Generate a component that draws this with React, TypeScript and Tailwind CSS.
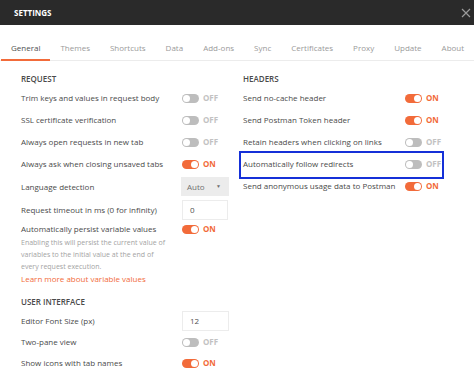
import React from "react";

const tabs = ["General", "Themes", "Shortcuts", "Data", "Add-ons", "Sync", "Certificates", "Proxy", "Update", "About"];

function Toggle({ on }: { on: boolean }) {
  return (
    <div className="flex items-center gap-[4px]">
      <div
        className={
          on
            ? "flex h-[9px] w-[17px] items-center justify-end rounded-full bg-[#f26b3a] px-[1px]"
            : "flex h-[9px] w-[17px] items-center justify-start rounded-full bg-[#bdbdbd] px-[1px]"
        }
      >
        <div className="h-[7px] w-[7px] rounded-full bg-white" />
      </div>
      <span className={on ? "text-[8px] font-bold text-[#f26b3a]" : "text-[8px] font-bold text-[#c2c2c2]"}>
        {on ? "ON" : "OFF"}
      </span>
    </div>
  );
}

function Row({ label, children, h = "h-[22px]" }: { label: string; children: React.ReactNode; h?: string }) {
  return (
    <div className={`flex items-center ${h}`}>
      <span className="flex-1 whitespace-nowrap text-[8px] text-[#4a4a4a]">{label}</span>
      <div className="w-[53px] shrink-0">{children}</div>
    </div>
  );
}

function Heading({ children }: { children: React.ReactNode }) {
  return <div className="flex h-[16px] items-center text-[8px] font-semibold text-[#4a4a4a]">{children}</div>;
}

export default function App() {
  return (
    <div className="h-[368px] w-[474px] overflow-hidden bg-white" style={{ fontFamily: "'Open Sans', sans-serif" }}>
      <div className="flex h-[25px] items-center justify-between bg-[#2a2a2a] pl-[14px] pr-[3px]">
        <span className="text-[8px] font-bold text-white">SETTINGS</span>
        <svg width="10" height="10" viewBox="0 0 10 10" className="text-[#9a9a9a]">
          <path d="M1 1L9 9M9 1L1 9" stroke="currentColor" strokeWidth="1.2" />
        </svg>
      </div>

      <div className="flex h-[36px] border-b border-[#ececec] pl-[1px]">
        {tabs.map((t, i) => (
          <div
            key={t}
            className={
              i === 0
                ? "-mb-px h-[36px] whitespace-nowrap border-b-2 border-[#f26b3a] px-[10px] pt-[17px] text-[8px] leading-[12px] text-[#505050]"
                : "h-[35px] whitespace-nowrap px-[10px] pt-[17px] text-[8px] leading-[12px] text-[#9a9a9a]"
            }
          >
            {t}
          </div>
        ))}
      </div>

      <div className="mt-[10px] flex gap-[8px]">
        <div className="ml-[21px] w-[214px]">
          <Heading>REQUEST</Heading>
          <Row label="Trim keys and values in request body">
            <Toggle on={false} />
          </Row>
          <Row label="SSL certificate verification">
            <Toggle on={false} />
          </Row>
          <Row label="Always open requests in new tab">
            <Toggle on={false} />
          </Row>
          <Row label="Always ask when closing unsaved tabs">
            <Toggle on />
          </Row>
          <Row label="Language detection" h="h-[23px]">
            <div className="-ml-[1px] flex h-[19px] w-[48px] items-center justify-between bg-[#ececec] pl-[6px] pr-[8px] text-[8px] text-[#707070]">
              <span>Auto</span>
              <span className="text-[5px]">▼</span>
            </div>
          </Row>
          <Row label="Request timeout in ms (0 for infinity)" h="h-[23px]">
            <div className="flex h-[20px] w-[46px] items-center border border-[#ececec] pl-[7px] text-[8px] text-[#505050]">
              0
            </div>
          </Row>
          <div className="flex h-[16px] items-center">
            <span className="flex-1 text-[8px] text-[#4a4a4a]">Automatically persist variable values</span>
            <div className="w-[53px] shrink-0">
              <Toggle on />
            </div>
          </div>
          <p className="w-[150px] text-[7px] leading-[12px] text-[#a3a3a3]">
            Enabling this will persist the current value of variables to the initial value at the end of every request execution.
          </p>
          <div className="text-[8px] leading-[12px] text-[#f26b3a]">Learn more about variable values</div>
          <div className="mt-[9px]">
            <Heading>USER INTERFACE</Heading>
          </div>
          <Row label="Editor Font Size (px)" h="h-[21px]">
            <div className="flex h-[20px] w-[47px] items-center border border-[#ececec] pl-[7px] text-[8px] text-[#505050]">
              12
            </div>
          </Row>
          <Row label="Two-pane view">
            <Toggle on={false} />
          </Row>
          <Row label="Show icons with tab names" h="h-[20px]">
            <Toggle on />
          </Row>
        </div>

        <div className="w-[215px]">
          <Heading>HEADERS</Heading>
          <Row label="Send no-cache header">
            <Toggle on />
          </Row>
          <Row label="Send Postman Token header">
            <Toggle on />
          </Row>
          <Row label="Retain headers when clicking on links">
            <Toggle on={false} />
          </Row>
          <div className="relative">
            <Row label="Automatically follow redirects">
              <Toggle on={false} />
            </Row>
            <div className="pointer-events-none absolute -left-[4px] -top-[2px] h-[28px] w-[205px] border-2 border-[#1530d8]" />
          </div>
          <Row label="Send anonymous usage data to Postman">
            <Toggle on />
          </Row>
        </div>
      </div>
    </div>
  );
}
